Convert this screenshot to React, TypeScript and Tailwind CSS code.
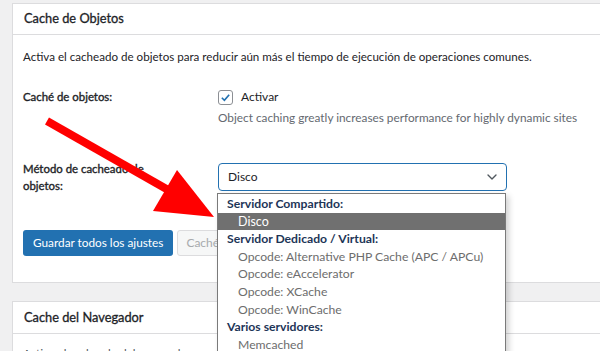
import { ChevronDown } from "lucide-react";

const GROUPS = [
  { label: "Servidor Compartido:", items: ["Disco"] },
  {
    label: "Servidor Dedicado / Virtual:",
    items: [
      "Opcode: Alternative PHP Cache (APC / APCu)",
      "Opcode: eAccelerator",
      "Opcode: XCache",
      "Opcode: WinCache",
    ],
  },
  { label: "Varios servidores:", items: ["Memcached"] },
];

function Dropdown() {
  return (
    <div className="absolute left-[217px] top-[193px] w-[289px] border border-[#7a7a7a] bg-white pt-[1px] shadow-[3px_3px_6px_rgba(0,0,0,0.18)]">
      {GROUPS.map((g) => (
        <div key={g.label}>
          <div className="h-[17.6px] whitespace-nowrap pl-[9px] text-[12.2px] font-bold leading-[17.6px] text-[#1d3557]">
            {g.label}
          </div>
          {g.items.map((it) => (
            <div
              key={it}
              className={
                it === "Disco"
                  ? "h-[17.6px] whitespace-nowrap bg-[#707070] pl-[20px] text-[12.5px] leading-[17.6px] text-white"
                  : "h-[17.6px] whitespace-nowrap pl-[20px] text-[12.2px] leading-[17.6px] text-[#6d6d6d]"
              }
            >
              {it}
            </div>
          ))}
        </div>
      ))}
    </div>
  );
}

function Arrow() {
  return (
    <svg className="pointer-events-none absolute left-0 top-0" width="600" height="351">
      <line x1="47" y1="121" x2="170" y2="191" stroke="#ff0000" strokeWidth="8" />
      <polygon points="177,170 214,217 153,211" fill="#ff0000" />
    </svg>
  );
}

export default function App() {
  return (
    <div
      className="relative h-[351px] w-[600px] overflow-hidden bg-[#f0f0f1] pl-[12px] pt-[3px] text-[#1d2327]"
      style={{ fontFamily: 'Lato, "Noto Sans", sans-serif' }}
    >
      <section className="mr-[-20px] border border-r-0 border-[#dcdcde] bg-white">
        <div className="flex h-[31px] items-center border-b border-[#dcdcde] pl-[11px] text-[12.8px] [-webkit-text-stroke:0.3px]">
          Cache de Objetos
        </div>
        <div className="px-[10px] pb-[26px]">
          <p className="mt-[13px] whitespace-nowrap text-[11.6px] leading-[18px]">
            Activa el cacheado de objetos para reducir aún más el tiempo de ejecución de operaciones comunes.
          </p>

          <div className="mt-[22px] flex">
            <div className="w-[195px] text-[11.4px] leading-[18px] [-webkit-text-stroke:0.35px]">Caché de objetos:</div>
            <div>
              <label className="flex items-center gap-[8px] text-[12px]">
                <span className="flex h-[15px] w-[15px] items-center justify-center rounded-[3px] border border-[#8c8f94] bg-white">
                  <svg width="11" height="11" viewBox="0 0 12 12">
                    <path d="M2 6.3 4.8 9 10 3" fill="none" stroke="#2271b1" strokeWidth="1.8" />
                  </svg>
                </span>
                Activar
              </label>
              <p className="mt-[3px] whitespace-nowrap text-[11.8px] leading-[18px] text-[#646970]">
                Object caching greatly increases performance for highly dynamic sites
              </p>
            </div>
          </div>

          <div className="mt-[36px] flex">
            <div className="mt-[-3px] w-[195px] text-[11.4px] leading-[17px] [-webkit-text-stroke:0.35px]">
              Método de cacheado de
              <br />
              objetos:
            </div>
            <div className="flex h-[28px] w-[289px] items-center justify-between rounded-[4px] border border-[#2271b1] pl-[9px] pr-[6px] text-[12px]">
              Disco
              <ChevronDown className="h-[16px] w-[16px] text-[#50575e]" strokeWidth={2} />
            </div>
          </div>

          <div className="mt-[36px] flex gap-[4px]">
            <button className="h-[26px] rounded-[3px] bg-[#2271b1] px-[10px] text-[11.8px] text-white">
              Guardar todos los ajustes
            </button>
            <button className="h-[26px] rounded-[3px] border border-[#dcdcde] bg-[#f6f7f7] px-[8px] text-[12px] text-[#a7aaad]">
              Caché
            </button>
          </div>
        </div>
      </section>

      <section className="mr-[-20px] mt-[18px] border border-r-0 border-[#dcdcde] bg-white">
        <div className="flex h-[32px] items-center border-b border-[#dcdcde] pl-[11px] text-[12.8px] [-webkit-text-stroke:0.3px]">
          Cache del Navegador
        </div>
        <p className="whitespace-nowrap px-[10px] pt-[11px] text-[11.5px] text-[#50575e]">
          Activa el cacheado del navegador para reducir las peticiones al servidor.
        </p>
      </section>

      <Dropdown />
      <Arrow />
    </div>
  );
}
